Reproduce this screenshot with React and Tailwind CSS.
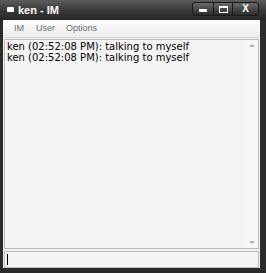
export default function App() {
  return (
    <div className="w-[266px] h-[273px] bg-[#2b2b2b] flex flex-col overflow-hidden" style={{ fontFamily: '"DejaVu Sans", sans-serif' }}>
      {/* Title bar */}
      <div className="h-[20px] flex items-start bg-gradient-to-b from-[#5c5c5c] via-[#3a3a3a] to-[#262626] relative">
        <div className="mt-[7px] ml-[7px] w-[7px] h-[5px] bg-white rounded-[1px]" />
        <div className="ml-[4px] mt-[3px] text-white text-[11px] font-bold leading-[14px]" style={{ fontFamily: '"Liberation Sans", sans-serif' }}>ken - IM</div>
        <div className="absolute left-[192px] top-[2px] w-[67px] h-[14px] flex border border-[#1a1a1a] rounded-[3px] overflow-hidden bg-gradient-to-b from-[#6a6a6a] to-[#2c2c2c]">
          <div className="w-[21px] h-full flex items-end justify-center pb-[3px] border-r border-[#1a1a1a]">
            <div className="w-[8px] h-[3px] bg-white" />
          </div>
          <div className="w-[19px] h-full flex items-center justify-center border-r border-[#1a1a1a]">
            <div className="w-[9px] h-[7px] border border-white border-t-[2px]" />
          </div>
          <div className="flex-1 h-full flex items-center justify-center text-white text-[10px] font-bold leading-none" style={{ fontFamily: '"Liberation Sans", sans-serif' }}>X</div>
        </div>
      </div>
      {/* Body */}
      <div className="flex-1 flex flex-col ml-[3px] mr-[6px] mb-[5px] bg-[#f0f0f0]">
        {/* Menu */}
        <div className="h-[18px] flex items-center bg-gradient-to-b from-[#fbfbfb] to-[#eeeeee] text-[#6e6e6e] text-[9px] border-b border-[#d6d6d6]" style={{ fontFamily: '"Liberation Sans", sans-serif' }}>
          <span className="ml-[11px]">IM</span>
          <span className="ml-[12px]">User</span>
          <span className="ml-[11px]">Options</span>
        </div>
        {/* Transcript */}
        <div className="mt-[1px] mx-[1px] flex-1 flex border border-[#bdbdbd] bg-[#f4f4f4]">
          <div className="flex-1 pl-[2px] pt-[1px] text-black text-[10px] leading-[11px]">
            <div>ken (02:52:08 PM): talking to myself</div>
            <div>ken (02:52:08 PM): talking to myself</div>
          </div>
          <div className="w-[12px] flex flex-col justify-between items-center py-[4px] bg-[#f7f7f7]">
            <div className="w-0 h-0 border-l-[3px] border-r-[3px] border-b-[3px] border-l-transparent border-r-transparent border-b-[#b0b0b0]" />
            <div className="w-0 h-0 border-l-[3px] border-r-[3px] border-t-[3px] border-l-transparent border-r-transparent border-t-[#b0b0b0]" />
          </div>
        </div>
        {/* Input */}
        <div className="mt-[2px] mx-[1px] h-[17px] border border-[#bdbdbd] bg-[#f4f4f4] flex items-center">
          <div className="ml-[2px] w-[1px] h-[11px] bg-black" />
        </div>
      </div>
    </div>
  );
}
